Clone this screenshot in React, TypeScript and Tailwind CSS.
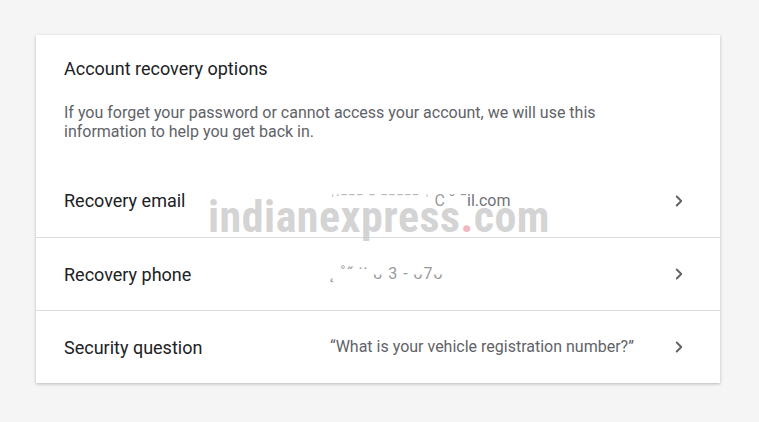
import { ChevronRight } from "lucide-react";

const rows = [
  { label: "Recovery email", value: "email" },
  { label: "Recovery phone", value: "phone" },
  { label: "Security question", value: "question" },
];

function Value({ kind }: { kind: string }) {
  if (kind === "email") {
    return (
      <span className="text-[16px] text-[#6f7377]">
        <span className="text-[#b8b8b8] tracking-[0.5px]">ˈ˙ˉˉˉ ˉ ˉˉˉˉˉ ˈ </span>
        <span className="text-[#9a9a9a]">C ˘ ˉ</span>il.com
      </span>
    );
  }
  if (kind === "phone") {
    return (
      <span className="text-[16px] text-[#9a9a9a] tracking-[1px]">
        ˛ ˚˝ ˙˙ ᴗ 3 ‐ ᴗ7ᴗ
      </span>
    );
  }
  return (
    <span className="text-[16px] text-[#5f6368]">
      “What is your vehicle registration number?”
    </span>
  );
}

export default function App() {
  return (
    <div className="min-h-screen w-[759px] h-[422px] bg-[#f5f5f5] pt-[35px] pl-[36px] font-['Roboto',sans-serif]">
      <div className="relative w-[684px] bg-white shadow-[0_1px_3px_rgba(0,0,0,0.25)]">
        {/* Header */}
        <div className="px-[28px] pt-[21px] pb-[23px]">
          <h2 className="text-[18px] leading-[26px] text-[#202124]">Account recovery options</h2>
          <p className="mt-[21px] text-[16px] leading-[19px] text-[#5f6368]">
            If you forget your password or cannot access your account, we will use this
            <br />
            information to help you get back in.
          </p>
        </div>

        {/* Rows */}
        {rows.map((r, i) => (
          <div
            key={r.label}
            className={`flex items-center h-[73px] pl-[28px] pr-[32px] ${i > 0 ? "border-t border-[#dadce0]" : ""}`}
          >
            <div className="w-[266px] text-[18px] text-[#202124]">{r.label}</div>
            <div className="flex-1">
              <Value kind={r.value} />
            </div>
            <ChevronRight className="w-[18px] h-[18px] text-[#5f6368]" strokeWidth={2.5} />
          </div>
        ))}

        {/* Watermark */}
        <div className="absolute left-[172px] top-[160px] text-[44px] leading-none font-bold text-[#c8c8c8]/80 font-['Liberation_Sans_Narrow','Roboto_Condensed','Roboto',sans-serif] tracking-[0.5px] pointer-events-none">
          indianexpress<span className="text-[#f0b8bd]">.</span>com
        </div>
      </div>
    </div>
  );
}
